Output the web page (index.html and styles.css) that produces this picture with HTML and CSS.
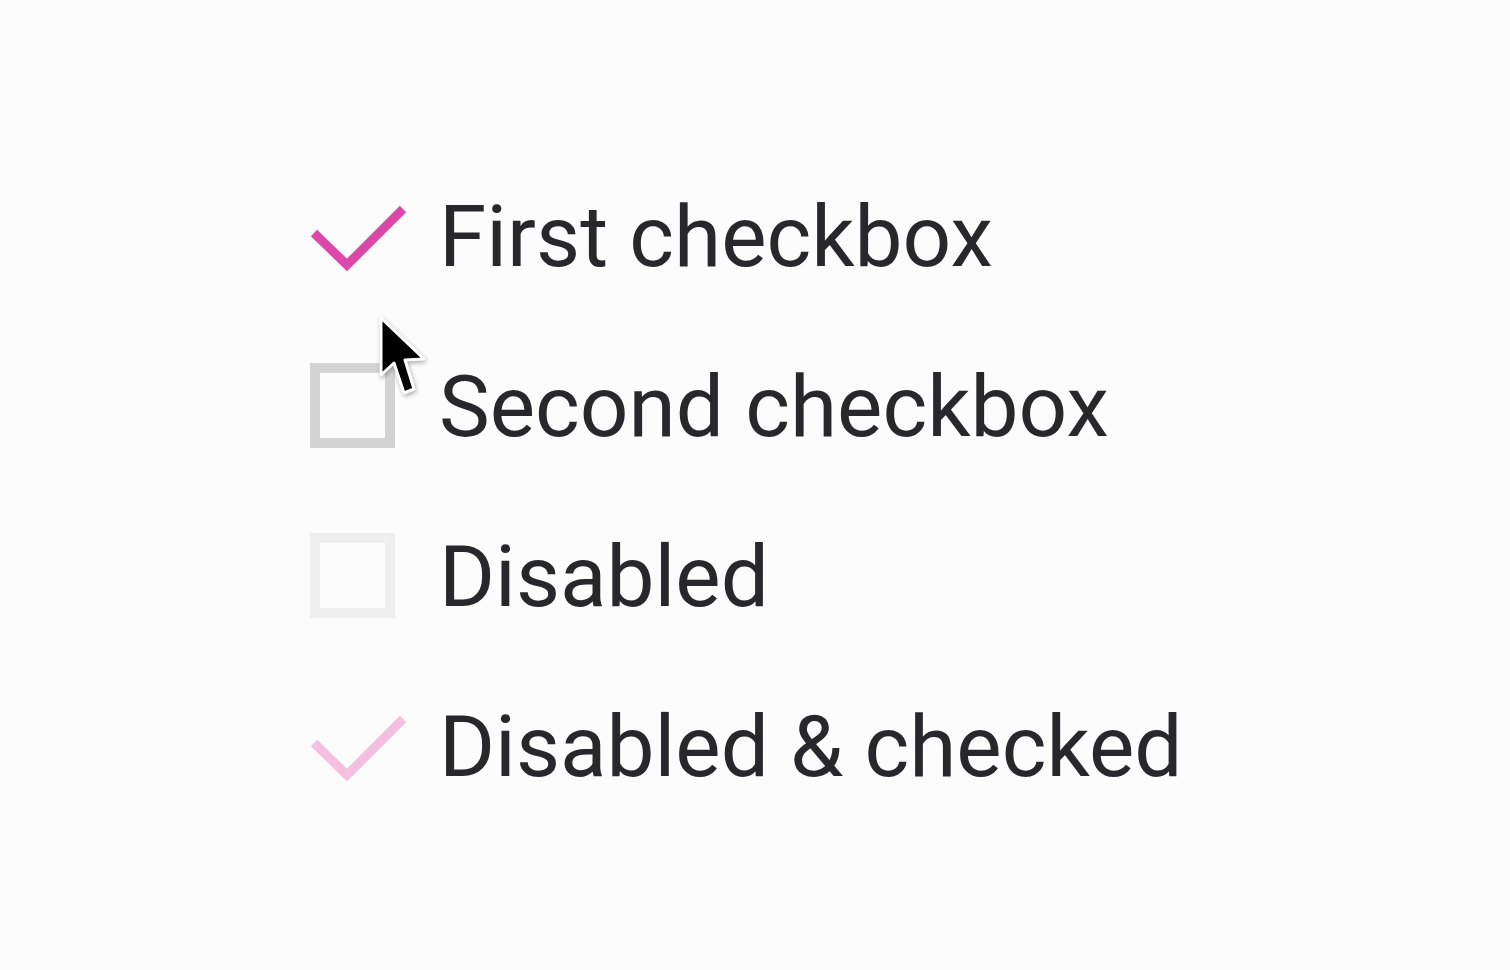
FILE: index.html
```html
<!DOCTYPE html>
<html lang="en">
<head>
  <meta charset="UTF-8" />
  <title>Checkboxes</title>
  <link rel="stylesheet" href="styles.css">
</head>
<body>

  <!-- Checkbox list -->
  <div class="checkbox-list">

    <label class="checkbox checked">
      <span class="box">
        <svg class="tick" width="96" height="85" viewBox="0 0 96 85">
          <polyline points="4,40 37,72 93,16" />
        </svg>
      </span>
      <span class="text">First checkbox</span>
    </label>

    <label class="checkbox">
      <span class="box"></span>
      <span class="text">Second checkbox</span>
    </label>

    <label class="checkbox disabled">
      <span class="box"></span>
      <span class="text">Disabled</span>
    </label>

    <label class="checkbox checked disabled">
      <span class="box">
        <svg class="tick" width="96" height="85" viewBox="0 0 96 85">
          <polyline points="4,40 37,72 93,16" />
        </svg>
      </span>
      <span class="text">Disabled &amp; checked</span>
    </label>

  </div>

  <!-- Mouse pointer hovering over the second box -->
  <svg class="pointer" width="52" height="86" viewBox="-4 -4 52 86">
    <polygon points="0,0 0,57 13,45 23,75 33,71 24,42 43,41" />
  </svg>

</body>
</html>
```

FILE: styles.css
```css
body {
  margin: 0;
  background: #fcfcfc;
  font-family: Roboto, "Noto Sans", sans-serif;
  color: #28282c;
}
/* List of checkboxes */
.checkbox-list {
  display: flex;
  flex-direction: column;
  gap: 85px;
  padding: 193px 0 0 310px;
}
.checkbox {
  display: flex;
  align-items: center;
  gap: 44px;
  height: 85px;
}
.checkbox .box {
  position: relative;
  width: 85px;
  height: 85px;
  box-sizing: border-box;
  border: 10px solid #d3d3d3;
  flex-shrink: 0;
}
.checkbox.disabled .box {
  border-color: #efefef;
}
.checkbox.checked .box {
  border: none;
}
.checkbox .tick {
  position: absolute;
  left: 0;
  top: 0;
  overflow: visible;
}
.checkbox .tick polyline {
  fill: none;
  stroke: #dc47aa;
  stroke-width: 9;
  stroke-linejoin: miter;
}
.checkbox.checked.disabled .tick polyline {
  stroke: #f5c0df;
}
.checkbox .text {
  font-size: 85.5px;
  line-height: 85px;
  padding-top: 3px;
  white-space: nowrap;
}
/* Pointer overlay */
.pointer {
  position: absolute;
  left: 377px;
  top: 314px;
  filter: drop-shadow(1px 2px 2px rgba(0, 0, 0, 0.3));
}
.pointer polygon {
  fill: #000;
  stroke: #fff;
  stroke-width: 3;
  stroke-linejoin: round;
}
```
